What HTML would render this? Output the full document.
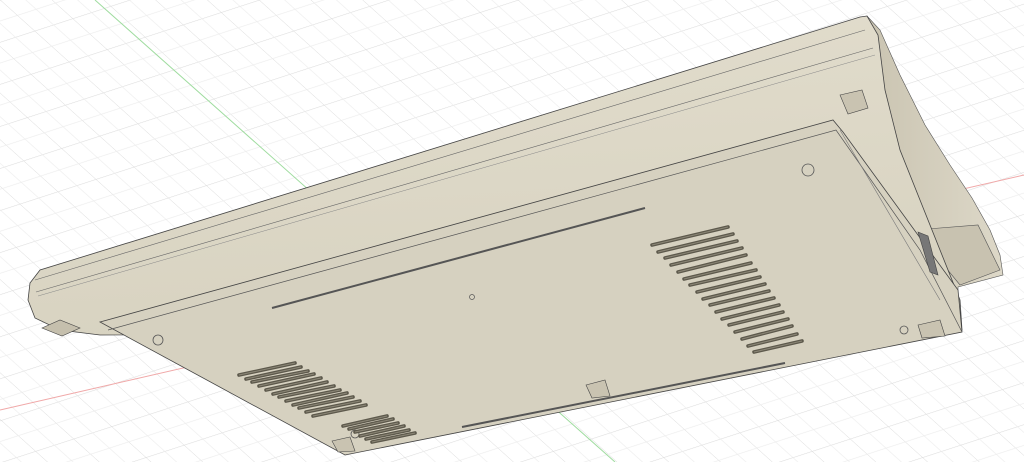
<!DOCTYPE html>
<html><head><style>html,body{margin:0;padding:0;background:#fff;overflow:hidden}svg{display:block}</style></head><body>
<svg width="1024" height="462" viewBox="0 0 1024 462" xmlns="http://www.w3.org/2000/svg">
<defs>
<pattern id="g" width="40" height="40" patternUnits="userSpaceOnUse" patternTransform="rotate(-18) skewX(30)">
<path d="M0 0H40M0 0V40" stroke="#dcdcdc" stroke-width="1" fill="none"/>
<path d="M0 20H40M20 0V40" stroke="#ececec" stroke-width="0.7" fill="none"/>
</pattern>
<linearGradient id="top" x1="0" y1="0" x2="0.2" y2="1"><stop offset="0" stop-color="#e2ddcd"/><stop offset="1" stop-color="#d8d3c1"/></linearGradient>
<linearGradient id="side" x1="0" y1="0" x2="1" y2="0"><stop offset="0" stop-color="#c9c3b0"/><stop offset="1" stop-color="#ddd8c8"/></linearGradient>
</defs>
<rect width="1024" height="462" fill="#fff"/>
<rect width="1024" height="462" fill="url(#g)"/>
<line x1="95" y1="0" x2="615" y2="462" stroke="#9fdc9f" stroke-width="1"/>
<line x1="0" y1="410" x2="1024" y2="175" stroke="#f0a8a8" stroke-width="1"/>
<path d="M867,16 L880,30 L900,75 L925,125 L950,165 L972,198 L990,230 L1000,255 L1003,275 L958,287 L958,300 L900,150 L860,60 Z" fill="url(#side)" stroke="#555" stroke-width="0.6"/>
<path d="M915,230 L978,225 L1000,270 L960,285 Z" fill="#c8c2b0" stroke="#555" stroke-width="0.6"/>
<path d="M28,300 L30,283 L40,270 L860,17 L867,16 L878,35 L885,90 L900,150 L960,300 L962,330 L100,335 L60,330 L35,318 Z" fill="url(#top)" stroke="#444" stroke-width="0.8"/>
<path d="M35,280 L865,30" stroke="#666" stroke-width="0.6"/>
<path d="M36,292 L873,48" stroke="#666" stroke-width="0.6"/>
<path d="M38,296 L875,55" stroke="#888" stroke-width="0.5"/>
<path d="M100,322 L833,120 L843,132 L958,290 L962,332 L345,455 Z" fill="#d6d1c0" stroke="#444" stroke-width="0.8"/>
<path d="M108,330 L836,130 L920,250 L962,332" fill="none" stroke="#555" stroke-width="0.7"/>
<path d="M840,130 L940,300" stroke="#777" stroke-width="0.6"/>
<path d="M272,308 L645,208" stroke="#555" stroke-width="2"/>
<path d="M462,427 L785,363" stroke="#555" stroke-width="2"/>
<path d="M42,328 L60,320 L80,328 L62,336 Z" fill="#c5bfad" stroke="#444" stroke-width="0.6"/>
<path d="M840,95 L862,90 L868,108 L848,114 Z" fill="#c9c3b1" stroke="#444" stroke-width="0.6"/>
<path d="M918,325 L940,320 L945,336 L922,338 Z" fill="#c9c3b1" stroke="#444" stroke-width="0.6"/>
<path d="M586,385 L605,380 L610,396 L592,398 Z" fill="#c9c3b1" stroke="#444" stroke-width="0.6"/>
<path d="M332,441 L350,437 L355,451 L338,452 Z" fill="#c9c3b1" stroke="#444" stroke-width="0.6"/>
<circle cx="808" cy="170" r="6" fill="none" stroke="#555" stroke-width="0.8"/>
<circle cx="158" cy="340" r="5" fill="none" stroke="#555" stroke-width="0.8"/>
<circle cx="904" cy="330" r="4" fill="none" stroke="#555" stroke-width="0.8"/>
<circle cx="355" cy="434" r="4" fill="none" stroke="#555" stroke-width="0.8"/>
<circle cx="472" cy="297" r="2.5" fill="none" stroke="#555" stroke-width="0.7"/>
<path d="M918,232 L928,236 L938,275 L930,272 Z" fill="#777" stroke="#444" stroke-width="0.6"/>
<g id="v" stroke="#5d594c" stroke-width="3.6" stroke-linecap="round" fill="none">
<path d="M652,245L728,227M658,252L733,234M665,258L737,241M671,265L742,248M678,272L746,255M684,279L751,263M690,285L756,270M697,292L760,277M703,299L765,284M710,305L769,291M716,312L774,298M722,319L779,305M729,325L783,312M735,332L788,319M742,339L792,326M748,346L797,334M754,352L802,341"/>
<path d="M239,375L295,363M246,379L301,367M252,382L308,371M259,386L314,374M266,390L321,378M273,394L327,382M279,397L334,386M286,401L340,390M293,405L347,393M299,408L353,397M306,412L360,401M313,416L366,405"/>
<path d="M343,426L387,416M349,429L393,419M355,432L398,423M360,436L404,426M366,439L409,430M372,442L415,433"/>
</g>
<g stroke="#8c8777" stroke-width="1" fill="none">
<path d="M652,245L728,227M658,252L733,234M665,258L737,241M671,265L742,248M678,272L746,255M684,279L751,263M690,285L756,270M697,292L760,277M703,299L765,284M710,305L769,291M716,312L774,298M722,319L779,305M729,325L783,312M735,332L788,319M742,339L792,326M748,346L797,334M754,352L802,341"/>
<path d="M239,375L295,363M246,379L301,367M252,382L308,371M259,386L314,374M266,390L321,378M273,394L327,382M279,397L334,386M286,401L340,390M293,405L347,393M299,408L353,397M306,412L360,401M313,416L366,405"/>
<path d="M343,426L387,416M349,429L393,419M355,432L398,423M360,436L404,426M366,439L409,430M372,442L415,433"/>
</g>
</svg>
</body></html>
